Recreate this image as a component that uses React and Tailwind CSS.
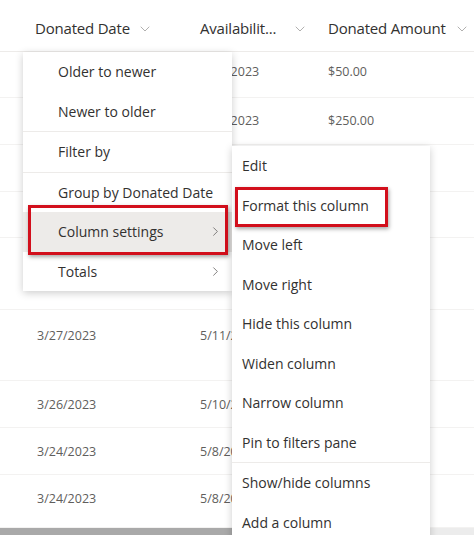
import { ChevronDown, ChevronRight } from "lucide-react";

const rows = [
  { h: "h-[46px]", pt: "pt-[11px]", date: "3/30/2023", avail: "5/12/2023", amount: "$50.00" },
  { h: "h-[47px]", pt: "pt-[14px]", date: "3/29/2023", avail: "5/12/2023", amount: "$250.00" },
  { h: "h-[47px]", pt: "pt-[15px]", date: "3/29/2023", avail: "5/12/2023", amount: "$100.00" },
  { h: "h-[46px]", pt: "pt-[15px]", date: "3/28/2023", avail: "5/11/2023", amount: "$75.00" },
  { h: "h-[72px]", pt: "pt-[15px]", date: "3/28/2023", avail: "5/11/2023", amount: "$25.00" },
  { h: "h-[71px]", pt: "pt-[17px]", date: "3/27/2023", avail: "5/11/2023", amount: "$40.00" },
  { h: "h-[47px]", pt: "pt-[15px]", date: "3/26/2023", avail: "5/10/2023", amount: "$60.00" },
  { h: "h-[47px]", pt: "pt-[15px]", date: "3/24/2023", avail: "5/8/2023", amount: "$20.00" },
  { h: "h-[53px]", pt: "pt-[15px]", date: "3/24/2023", avail: "5/8/2023", amount: "$30.00" },
];

const MenuItem = ({ label, arrow, active }) => (
  <div className={`h-[39.5px] flex items-center justify-between pl-[35px] pr-[9px] ${active ? "bg-[#edebe9]" : ""}`}>
    <span>{label}</span>
    {arrow && <ChevronRight className="w-[15px] h-[15px] text-[#605e5c]" strokeWidth={1.25} />}
  </div>
);

const SubItem = ({ label }) => (
  <div className="h-[39.5px] flex items-center pl-[10px]">{label}</div>
);

export default function App() {
  return (
    <div className="relative w-[474px] h-[535px] overflow-hidden bg-white font-['Open_Sans',sans-serif] text-[#323130]">
      {/* header */}
      <div className="h-[52px] pt-[6px] flex items-center border-b border-[#edebe9] text-[15px] tracking-[-0.2px]">
        <div className="w-[200px] pl-[35px] flex items-center gap-[7px]">
          <span>Donated Date</span>
          <ChevronDown className="w-[16px] h-[16px] text-[#8a8886]" strokeWidth={1} />
        </div>
        <div className="w-[128px] flex items-center">
          <span className="w-[92px] whitespace-nowrap">Availabilit...</span>
          <ChevronDown className="w-[16px] h-[16px] text-[#8a8886]" strokeWidth={1} />
        </div>
        <div className="flex items-center gap-[8px]">
          <span>Donated Amount</span>
          <ChevronDown className="w-[16px] h-[16px] text-[#8a8886]" strokeWidth={1} />
        </div>
      </div>

      {/* rows */}
      {rows.map((r, i) => (
        <div key={i} className={`${r.h} ${r.pt} flex items-start border-b border-[#f3f2f1] text-[12.5px] text-[#605e5c]`}>
          <div className="w-[200px] pl-[37px]">{r.date}</div>
          <div className="w-[128px]">{r.avail}</div>
          <div>{r.amount}</div>
        </div>
      ))}

      {/* scrollbar */}
      <div className="absolute left-0 bottom-0 w-full h-[7px] bg-[#ececec]">
        <div className="w-[300px] h-full bg-[#a9a9a9]" />
      </div>

      {/* column menu */}
      <div className="absolute left-[23px] top-[52px] w-[209px] bg-white text-[14px] shadow-[0_2px_8px_rgba(0,0,0,0.2)]">
        <MenuItem label="Older to newer" />
        <MenuItem label="Newer to older" />
        <div className="border-t border-[#edebe9]" />
        <MenuItem label="Filter by" />
        <div className="border-t border-[#edebe9]" />
        <MenuItem label="Group by Donated Date" />
        <MenuItem label="Column settings" arrow active />
        <MenuItem label="Totals" arrow />
        <div className="absolute left-[5px] top-[153px] w-[200px] h-[50px] border-[3px] border-[#d20f1c] shadow-[1px_2px_4px_rgba(0,0,0,0.35)]" />
      </div>

      {/* submenu */}
      <div className="absolute left-[232px] top-[146px] w-[198px] h-[420px] bg-white text-[14px] shadow-[0_2px_8px_rgba(0,0,0,0.2)]">
        <SubItem label="Edit" />
        <SubItem label="Format this column" />
        <SubItem label="Move left" />
        <SubItem label="Move right" />
        <SubItem label="Hide this column" />
        <SubItem label="Widen column" />
        <SubItem label="Narrow column" />
        <SubItem label="Pin to filters pane" />
        <div className="border-t border-[#edebe9]" />
        <SubItem label="Show/hide columns" />
        <SubItem label="Add a column" />
        <div className="absolute left-[3px] top-[41px] w-[153px] h-[40px] border-[3px] border-[#d20f1c] shadow-[1px_2px_4px_rgba(0,0,0,0.35)]" />
      </div>
    </div>
  );
}
